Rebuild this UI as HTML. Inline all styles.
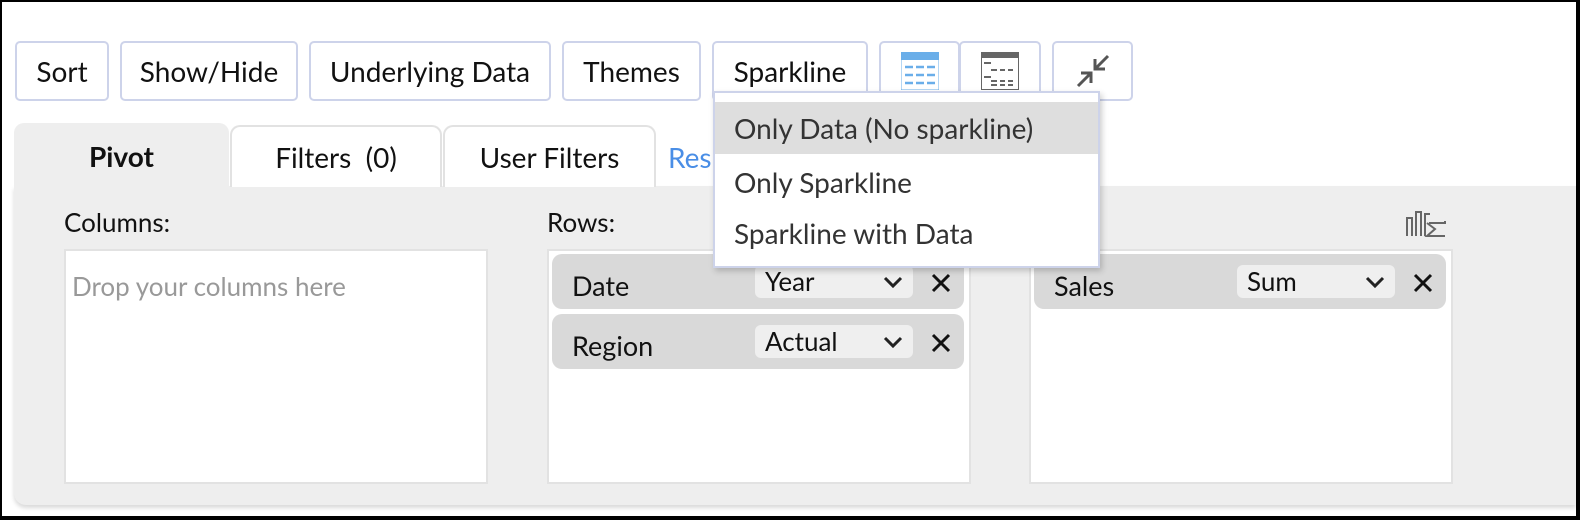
<!DOCTYPE html>
<html><head><meta charset="utf-8"><style>
*{box-sizing:border-box;margin:0;padding:0}
body{width:1580px;height:520px;background:#000;font-family:"Lato","Liberation Sans",sans-serif;color:#111;position:relative;overflow:hidden}
.frame{position:absolute;left:2px;top:2px;width:1574px;height:514px;background:#fff}
.btn{position:absolute;top:41px;height:60px;border:2px solid #cdd3ea;border-radius:5px;background:#fff;font-size:28px;display:flex;align-items:center;justify-content:center}
.tab{position:absolute;top:125px;height:62px;border:2px solid #e2e2e2;border-bottom:none;border-radius:10px 10px 0 0;background:#fff;font-size:28px;display:flex;align-items:center;justify-content:center}
.panel{position:absolute;left:14px;top:186px;width:1562px;height:319px;background:#eeeeee;border-radius:0 0 0 12px;box-shadow:0 3px 4px rgba(0,0,0,.15)}
.lbl{position:absolute;top:206px;font-size:26px}
.box{position:absolute;top:249px;width:424px;height:235px;background:#fff;border:2px solid #e2e2e2}
.pill{position:absolute;width:412px;height:55px;background:#d9d9d9;border-radius:10px;font-size:27px}
.pill .n{position:absolute;left:20px;top:15px}
.sel{position:absolute;left:203px;top:11px;width:158px;height:33px;background:#efefef;border-radius:6px;font-size:26px;padding:0 0 0 10px}
.sel svg{position:absolute;right:10px;top:11px}
.x{position:absolute;left:378px;top:18px}
.dd{position:absolute;left:713px;top:91px;width:387px;height:177px;background:#fff;border:2px solid #cdd3ea;box-shadow:2px 3px 6px rgba(0,0,0,.2)}
.it{position:absolute;left:0;width:383px;height:52px;font-size:28px;color:#333;padding:9px 0 0 19px}
</style></head><body>
<div class="frame"></div>
<div class="btn" style="left:15px;width:94px">Sort</div>
<div class="btn" style="left:120px;width:178px">Show/Hide</div>
<div class="btn" style="left:309px;width:242px">Underlying Data</div>
<div class="btn" style="left:562px;width:139px">Themes</div>
<div class="btn" style="left:712px;width:156px">Sparkline</div>
<div class="btn" style="left:879px;width:81px"><svg width="38" height="38" viewBox="0 0 38 38"><rect x="0" y="0" width="38" height="38" fill="#fff" stroke="#6aaee9" stroke-width="1"/><rect x="0" y="0" width="38" height="8" fill="#6aaee9"/><g stroke="#6aaee9" stroke-width="2.5"><path d="M4 15h8M15 15h8M26 15h8M4 23h8M15 23h8M26 23h8M4 31h8M15 31h8M26 31h8"/></g></svg></div>
<div class="btn" style="left:959px;width:82px"><svg width="38" height="38" viewBox="0 0 38 38"><rect x="0.5" y="0.5" width="37" height="37" fill="#fff" stroke="#666"/><rect x="0" y="0" width="38" height="6" fill="#666"/><g stroke="#666" stroke-width="2"><path d="M3 11h7M3 25h7M10 18h6M19 18h5M27 18h5M10 29h6M19 29h5M27 29h5M19 33h5M27 33h5M10 33h6"/></g></svg></div>
<div class="btn" style="left:1052px;width:81px"><svg width="36" height="36" viewBox="0 0 36 36" fill="none" stroke="#555" stroke-width="3"><path d="M33 3L20 16M20 6v10h10M3 33l13-13M6 20h10v10"/></svg></div>

<div class="panel"></div>
<div class="tab" style="left:14px;top:123px;width:215px;height:64px;background:#eeeeee;border-color:#eee;font-weight:bold">Pivot</div>
<div class="tab" style="left:230px;width:212px">Filters&nbsp;&nbsp;(0)</div>
<div class="tab" style="left:443px;width:213px">User Filters</div>
<div style="position:absolute;left:668px;top:140px;font-size:28px;color:#4a8ee6">Res</div>

<div class="lbl" style="left:64px">Columns:</div>
<div class="lbl" style="left:547px">Rows:</div>
<div class="box" style="left:64px"><div style="position:absolute;left:6px;top:19px;font-size:26px;color:#999">Drop your columns here</div></div>
<div class="box" style="left:547px"></div>
<div class="box" style="left:1029px"></div>
<svg style="position:absolute;left:1405px;top:210px" width="44" height="28" viewBox="0 0 44 28" fill="none" stroke="#666" stroke-width="2"><path d="M2 26V8h5v18M11 26V2h5v24M20 26V4h5M24 13h16v-2M40 26H22l8-7-8-6"/></svg>

<div class="pill" style="left:552px;top:254px"><span class="n">Date</span><div class="sel">Year<svg width="20" height="12"><path d="M2 2l8 8 8-8" stroke="#222" stroke-width="3" fill="none"/></svg></div><svg class="x" width="22" height="22"><path d="M3 3l16 16M19 3L3 19" stroke="#111" stroke-width="3"/></svg></div>
<div class="pill" style="left:552px;top:314px"><span class="n">Region</span><div class="sel">Actual<svg width="20" height="12"><path d="M2 2l8 8 8-8" stroke="#222" stroke-width="3" fill="none"/></svg></div><svg class="x" width="22" height="22"><path d="M3 3l16 16M19 3L3 19" stroke="#111" stroke-width="3"/></svg></div>
<div class="pill" style="left:1034px;top:254px"><span class="n">Sales</span><div class="sel">Sum<svg width="20" height="12"><path d="M2 2l8 8 8-8" stroke="#222" stroke-width="3" fill="none"/></svg></div><svg class="x" width="22" height="22"><path d="M3 3l16 16M19 3L3 19" stroke="#111" stroke-width="3"/></svg></div>

<div class="dd">
<div class="it" style="top:9px;background:#dedede">Only Data (No sparkline)</div>
<div class="it" style="top:63px">Only Sparkline</div>
<div class="it" style="top:114px">Sparkline with Data</div>
</div>
</body></html>
